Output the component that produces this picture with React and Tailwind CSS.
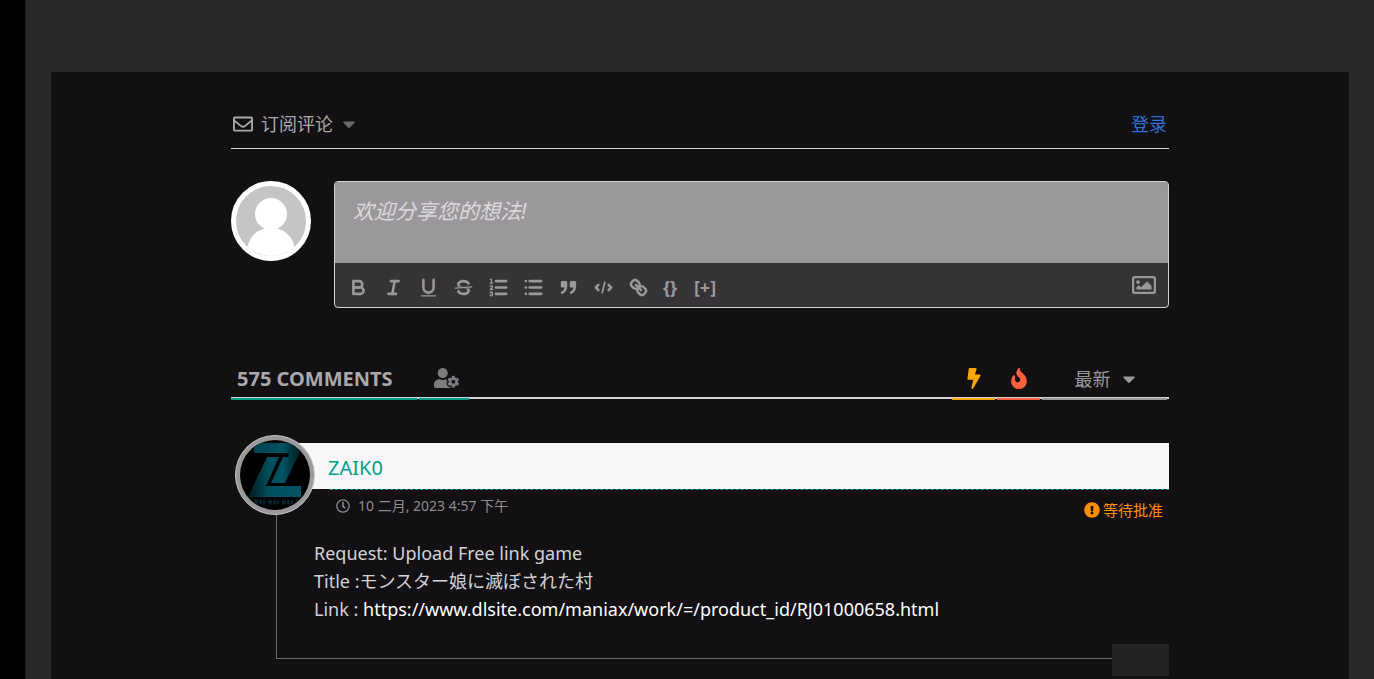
import React, { useState } from 'react';
import {
  FaBolt,
  FaCaretDown,
  FaExclamationCircle,
  FaFire,
  FaRegClock,
  FaRegEnvelope,
  FaRegImage,
  FaUserCog,
} from 'react-icons/fa';

function ToolbarIcon({ children }) {
  return (
    <svg
      viewBox="0 0 18 18"
      className="h-[23px] w-[23px]"
      fill="none"
      stroke="currentColor"
      strokeWidth="2"
      strokeLinecap="round"
      strokeLinejoin="round"
    >
      {children}
    </svg>
  );
}

const toolbarButtons = [
  {
    label: 'Bold',
    icon: (
      <>
        <path d="M5,4H9.5A2.5,2.5,0,0,1,12,6.5v0A2.5,2.5,0,0,1,9.5,9H5V4Z" />
        <path d="M5,9h5.5A2.5,2.5,0,0,1,13,11.5v0A2.5,2.5,0,0,1,10.5,14H5V9Z" />
      </>
    ),
  },
  {
    label: 'Italic',
    icon: (
      <>
        <line x1="7" x2="13" y1="4" y2="4" />
        <line x1="5" x2="11" y1="14" y2="14" />
        <line x1="8" x2="10" y1="14" y2="4" />
      </>
    ),
  },
  {
    label: 'Underline',
    icon: (
      <>
        <path d="M5,3V9a4.012,4.012,0,0,0,4,4H9a4.012,4.012,0,0,0,4-4V3" />
        <rect
          x="3"
          y="15"
          width="12"
          height="1"
          rx="0.5"
          fill="currentColor"
          stroke="none"
        />
      </>
    ),
  },
  {
    label: 'Strike',
    icon: (
      <>
        <line x1="15.5" x2="2.5" y1="8.5" y2="9.5" strokeWidth="1" />
        <g fill="currentColor" stroke="none">
          <path d="M9.007,8C6.542,7.791,6,7.519,6,6.5,6,5.792,7.283,5,9,5c1.571,0,2.765.679,2.969,1.309a1,1,0,0,0,1.9-.617C13.356,4.106,11.354,3,9,3,6.2,3,4,4.538,4,6.5a3.2,3.2,0,0,0,.5,1.843Z" />
          <path d="M8.984,10C11.457,10.208,12,10.479,12,11.5c0,0.708-1.283,1.5-3,1.5-1.571,0-2.765-.679-2.969-1.309a1,1,0,1,0-1.9.617C4.644,13.894,6.646,15,9,15c2.8,0,5-1.538,5-3.5a3.2,3.2,0,0,0-.5-1.843Z" />
        </g>
      </>
    ),
  },
  {
    label: 'Ordered List',
    icon: (
      <>
        <line x1="7" x2="15" y1="4" y2="4" />
        <line x1="7" x2="15" y1="9" y2="9" />
        <line x1="7" x2="15" y1="14" y2="14" />
        <g strokeWidth="1">
          <line x1="2.5" x2="4.5" y1="5.5" y2="5.5" />
          <path
            fill="currentColor"
            stroke="none"
            d="M3.5,6A0.5,0.5,0,0,1,3,5.5V3.085l-0.276.138A0.5,0.5,0,0,1,2.053,3c-0.124-.247-0.023-0.324.224-0.447l1-.5A0.5,0.5,0,0,1,4,2.5v3A0.5,0.5,0,0,1,3.5,6Z"
          />
          <path d="M4.5,10.5h-2c0-.234,1.85-1.076,1.85-2.234A0.959,0.959,0,0,0,2.5,8.156" />
          <path d="M2.5,14.846a0.959,0.959,0,0,0,1.85-.109A0.7,0.7,0,0,0,3.75,14a0.688,0.688,0,0,0,.6-0.736,0.959,0.959,0,0,0-1.85-.109" />
        </g>
      </>
    ),
  },
  {
    label: 'Unordered List',
    icon: (
      <>
        <line x1="6" x2="15" y1="4" y2="4" />
        <line x1="6" x2="15" y1="9" y2="9" />
        <line x1="6" x2="15" y1="14" y2="14" />
        <line x1="3" x2="3" y1="4" y2="4" />
        <line x1="3" x2="3" y1="9" y2="9" />
        <line x1="3" x2="3" y1="14" y2="14" />
      </>
    ),
  },
  {
    label: 'Blockquote',
    icon: (
      <g fill="currentColor">
        <rect x="4" y="5" width="3" height="3" />
        <rect x="11" y="5" width="3" height="3" />
        <path d="M7,8c0,4.031-3,5-3,5" />
        <path d="M14,8c0,4.031-3,5-3,5" />
      </g>
    ),
  },
  {
    label: 'Code Block',
    icon: (
      <>
        <polyline points="5 7 3 9 5 11" />
        <polyline points="13 7 15 9 13 11" />
        <line x1="10" x2="8" y1="5" y2="13" strokeWidth="1.4" />
      </>
    ),
  },
  {
    label: 'Link',
    icon: (
      <>
        <line x1="7" x2="11" y1="7" y2="11" />
        <path d="M8.9,4.577a3.476,3.476,0,0,1,.36,4.679A3.476,3.476,0,0,1,4.577,8.9C3.185,7.5,2.035,6.4,4.217,4.217S7.5,3.185,8.9,4.577Z" />
        <path d="M13.423,9.1a3.476,3.476,0,0,0-4.679-.36,3.476,3.476,0,0,0,.36,4.679c1.392,1.392,2.5,2.542,4.679.36S14.815,10.5,13.423,9.1Z" />
      </>
    ),
  },
];

function GuestAvatar() {
  return (
    <div className="h-20 w-20 shrink-0 overflow-hidden rounded-full border-[5px] border-white bg-[#c5c4c6]">
      <svg viewBox="0 0 70 70" className="h-full w-full" fill="#fff">
        <circle cx="35" cy="28" r="16" />
        <path d="M10 70C11 50 22 42 35 42s24 8 25 28Z" />
      </svg>
    </div>
  );
}

function AuthorAvatar() {
  return (
    <div className="absolute -top-2 -left-[42px] h-20 w-20 overflow-hidden rounded-full border border-[#c9c7ca] bg-[#9b989b] p-1">
      <svg viewBox="0 0 70 70" className="h-full w-full rounded-full bg-black">
        <defs>
          <linearGradient id="bandTop" x1="0" x2="1" y1="0" y2="0">
            <stop offset="0" stopColor="#00414f" />
            <stop offset="0.6" stopColor="#005464" />
            <stop offset="1" stopColor="#00181d" />
          </linearGradient>
          <linearGradient id="bandBottom" x1="0" x2="1" y1="0" y2="0">
            <stop offset="0" stopColor="#00181d" />
            <stop offset="0.4" stopColor="#004f5e" />
            <stop offset="1" stopColor="#005464" />
          </linearGradient>
        </defs>
        {/* two folded bands */}
        <path
          d="M14 3H61V10L45 43H31L43 17H48L49 13H14Z"
          fill="url(#bandTop)"
        />
        <path d="M27 17H39L26 46H61V57H8Z" fill="url(#bandBottom)" />
        <line
          x1="14"
          x2="58"
          y1="62"
          y2="62"
          stroke="#01242b"
          strokeWidth="5"
          strokeDasharray="4 1 3 1 2 3"
        />
      </svg>
    </div>
  );
}

function SubscribeBar() {
  return (
    <div className="flex h-[77px] items-end justify-between border-b border-[#d4d2d5] pb-3 text-lg leading-6">
      <button type="button" className="flex items-center pl-[2px] text-[#aaa8ab]">
        <FaRegEnvelope className="h-5 w-5" />
        <span className="ml-2">订阅评论</span>
        <FaCaretDown className="ml-[6px] h-5 w-5 text-[#6c6a6d]" />
      </button>
      <a href="#login" className="pr-[2px] text-[#2f6fd6]">
        登录
      </a>
    </div>
  );
}

function CommentForm() {
  const [text, setText] = useState('');

  return (
    <form
      className="mt-8 flex items-start gap-[23px]"
      onSubmit={(e) => e.preventDefault()}
    >
      <GuestAvatar />
      <div className="min-w-0 flex-1 overflow-hidden rounded border border-[#d4d2d5] bg-[#353336]">
        <textarea
          aria-label="欢迎分享您的想法!"
          placeholder="欢迎分享您的想法!"
          value={text}
          onChange={(e) => setText(e.target.value)}
          className="block h-[81px] w-full resize-none bg-[#9b989b] px-[18px] py-[13px] text-[21px] leading-8 text-[#353336] italic outline-none placeholder:text-[#dcdadd]"
        />
        <div className="flex h-11 items-center px-[6px] text-[#9b989b]">
          {toolbarButtons.map((button) => (
            <button
              key={button.label}
              type="button"
              aria-label={button.label}
              className="mt-1 flex h-8 w-[35px] items-center justify-center"
            >
              <ToolbarIcon>{button.icon}</ToolbarIcon>
            </button>
          ))}
          <button
            type="button"
            aria-label="Source Code"
            className="mt-1 h-8 w-7 text-lg font-bold"
          >
            {'{}'}
          </button>
          <button
            type="button"
            aria-label="Spoiler"
            className="mt-1 h-8 w-[42px] text-lg font-bold"
          >
            [+]
          </button>
          <button type="button" aria-label="Image" className="mr-[6px] ml-auto">
            <FaRegImage className="h-6 w-6" />
          </button>
        </div>
      </div>
    </form>
  );
}

function ThreadHeader() {
  return (
    <div className="mt-[51px] flex h-10 items-stretch border-b-2 border-[#d4d2d5]">
      <div className="-mb-[3px] flex w-[186px] items-center border-b-2 border-[#00a08d] pl-[6px] text-xl font-bold text-[#aaa8ab]">
        575 COMMENTS
      </div>
      <button
        type="button"
        aria-label="Comment authors"
        className="-mb-[3px] ml-[2px] flex w-[50px] items-center justify-center border-b-2 border-[#00a08d] pb-[2px] pl-1 text-[#7d7b7e]"
      >
        <FaUserCog className="h-5 w-[25px]" />
      </button>
      <div className="mr-[2px] -mb-[3px] ml-auto flex gap-[2px]">
        <button
          type="button"
          aria-label="Most reacted comment"
          className="flex w-[43px] items-center justify-center border-b-2 border-[#ffa600] text-[#ffa600]"
        >
          <FaBolt className="h-[21px] w-[14px]" />
        </button>
        <button
          type="button"
          aria-label="Hottest comment thread"
          className="flex w-[43px] items-center justify-center border-b-2 border-[#ff5f3c] text-[#ff5f3c]"
        >
          <FaFire className="h-[21px] w-4" />
        </button>
        <button
          type="button"
          className="flex w-[125px] items-center justify-center border-b-2 border-[#9b989b] pl-1 text-lg text-[#9b989b]"
        >
          最新
          <FaCaretDown className="ml-2 h-5 w-5" />
        </button>
      </div>
    </div>
  );
}

function Comment() {
  return (
    <article className="relative mt-11 ml-[45px] border-b border-l border-[#6c6a6d] pb-[35px]">
      <AuthorAvatar />
      <header className="-ml-px flex h-[46px] items-center bg-[#f8f6f9] pt-1 pl-[52px]">
        <h3 className="text-xl text-[#00a08d]">ZAIK0</h3>
      </header>
      <div className="ml-[53px] flex items-start justify-between border-t border-dashed border-[#00a08d]">
        <time
          dateTime="2023-02-10T16:57"
          className="mt-[6px] flex items-center gap-2 pl-[6px] text-sm leading-5 text-[#8f8d90]"
        >
          <FaRegClock className="h-[14px] w-[14px]" />
          10 二月, 2023 4:57 下午
        </time>
        <span className="mt-[10px] flex items-center gap-[3px] pr-[6px] text-[15px] leading-5 text-[#ff8f00]">
          <FaExclamationCircle className="h-4 w-4" />
          等待批准
        </span>
      </div>
      <p className="mt-[19px] pl-[37px] text-lg leading-7 text-[#d4d2d5]">
        Request: Upload Free link game
        <br />
        Title :<span lang="ja">モンスター娘に滅ぼされた村</span>
        <br />
        Link :{' '}
        <a
          href="https://www.dlsite.com/maniax/work/=/product_id/RJ01000658.html"
          className="text-white"
        >
          https://www.dlsite.com/maniax/work/=/product_id/RJ01000658.html
        </a>
      </p>
      <div className="absolute right-0 -bottom-[18px] h-8 w-[57px] bg-[#242225]" />
    </article>
  );
}

export default function App() {
  return (
    <div
      lang="zh-CN"
      className="flex min-h-screen bg-black pl-[25px] font-['Noto_Sans','Noto_Sans_CJK_SC',sans-serif]"
    >
      <div className="flex min-w-0 flex-1 flex-col border-l border-[#1c1b1d] bg-[#29272a] pt-[72px] pr-[25px] pl-[25px]">
        <main className="flex-1 bg-[#121013] px-[180px]">
          <SubscribeBar />
          <CommentForm />
          <ThreadHeader />
          <Comment />
        </main>
      </div>
    </div>
  );
}
